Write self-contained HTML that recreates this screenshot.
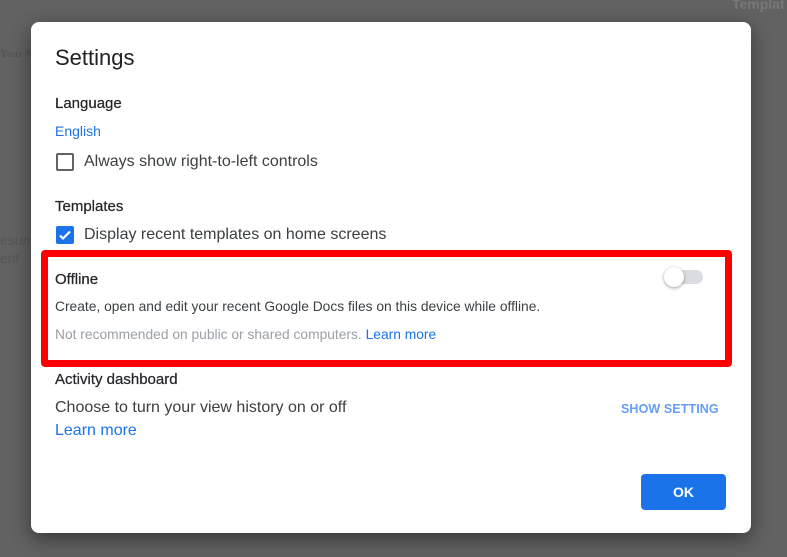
<!DOCTYPE html>
<html><head><meta charset="utf-8"><style>
*{margin:0;padding:0;box-sizing:border-box}
body{width:787px;height:557px;background:#626262;position:relative;overflow:hidden;font-family:"Liberation Sans",Arial,sans-serif}
.t{position:absolute;white-space:nowrap}
.dlg{position:absolute;left:31px;top:22px;width:720px;height:511px;background:#fff;border-radius:8px;box-shadow:0 6px 20px rgba(0,0,0,.45)}
.h{color:#202124;font-size:15px;-webkit-text-stroke:0.3px #3c4043}
.b{color:#3c4043;font-size:16px}
.s{color:#3c4043;font-size:13.8px}
.a{color:#1a73e8}
</style></head><body>
<div class="t" style="left:732px;top:-4px;color:#777;font-size:14px;font-weight:bold">Templat</div>
<div class="t" style="left:0;top:48px;color:#555;font-size:11px;font-family:'Liberation Serif',serif;font-weight:bold">Your Na</div>
<div class="t" style="left:0;top:232px;color:#555;font-size:14px">esum</div>
<div class="t" style="left:0;top:250px;color:#555;font-size:14px">erif</div>
<div class="dlg"></div>
<div class="t" style="left:55px;top:45px;font-size:22px;color:#202124">Settings</div>
<div class="t h" style="left:55px;top:95px">Language</div>
<div class="t a" style="left:55px;top:123px;font-size:14px">English</div>
<div style="position:absolute;left:56px;top:153px;width:18px;height:18px;border:2px solid #5f6368;border-radius:2px"></div>
<div class="t b" style="left:84px;top:153px">Always show right-to-left controls</div>
<div class="t h" style="left:55px;top:198px">Templates</div>
<div style="position:absolute;left:56px;top:226px;width:18px;height:18px;background:#1a73e8;border-radius:2px"><svg width="18" height="18" viewBox="0 0 18 18"><path d="M4 9.5l3 3 7-7" stroke="#fff" stroke-width="2.2" fill="none"/></svg></div>
<div class="t b" style="left:84px;top:226px">Display recent templates on home screens</div>
<div style="position:absolute;left:41px;top:250px;width:691px;height:117px;border:7px solid #f00;border-radius:4px"></div>
<div class="t h" style="left:55px;top:271px">Offline</div>
<div style="position:absolute;left:667px;top:270px;width:36px;height:14px;border-radius:7px;background:#dadce0"></div>
<div style="position:absolute;left:664px;top:267px;width:20px;height:20px;border-radius:50%;background:#fff;box-shadow:0 1px 3px rgba(0,0,0,.4)"></div>
<div class="t s" style="left:55px;top:299px">Create, open and edit your recent Google Docs files on this device while offline.</div>
<div class="t s" style="left:55px;top:327px;color:#9aa0a6">Not recommended on public or shared computers. <span class="a">Learn more</span></div>
<div class="t h" style="left:55px;top:371px">Activity dashboard</div>
<div class="t b" style="left:55px;top:399px">Choose to turn your view history on or off</div>
<div class="t a" style="left:55px;top:422px;font-size:16px">Learn more</div>
<div class="t" style="left:621px;top:402px;font-size:12.5px;font-weight:bold;color:#669df6;letter-spacing:.1px">SHOW SETTING</div>
<div style="position:absolute;left:641px;top:474px;width:85px;height:36px;background:#1a73e8;border-radius:4px;color:#fff;font-weight:bold;font-size:14px;text-align:center;line-height:36px">OK</div>
</body></html>
